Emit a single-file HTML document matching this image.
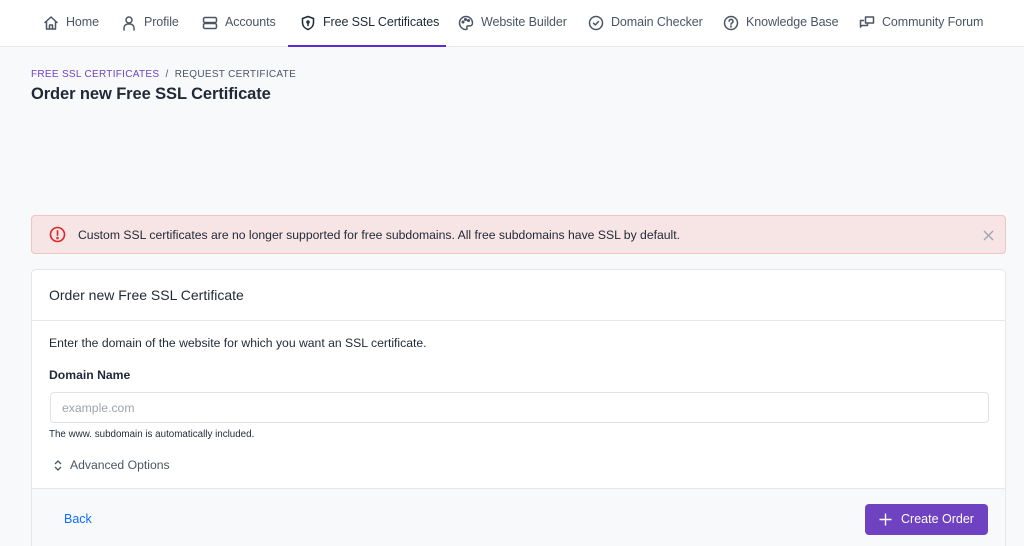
<!DOCTYPE html>
<html><head><meta charset="utf-8"><style>
*{box-sizing:border-box;margin:0;padding:0}
html,body{width:1024px;height:546px;overflow:hidden}
body{background:#f8f9fb;font-family:"Liberation Sans",sans-serif;color:#1f2937;position:relative}
.nav{position:absolute;left:0;top:0;width:1024px;height:47px;background:#fff;border-bottom:1px solid #e5e7eb}
.ni{position:absolute;top:0;height:46px;font-size:12.5px;color:#4b5563;letter-spacing:-.1px}
.ni svg{position:absolute;top:15px;width:16px;height:16px;fill:none;stroke:#4b5563;stroke-width:1.5;stroke-linecap:round;stroke-linejoin:round}
.ni span{position:absolute;top:15px;white-space:nowrap}
.ul{position:absolute;left:288px;top:45px;width:158px;height:2px;background:#5b2bd6}
.abs{position:absolute;white-space:nowrap}
.alert{position:absolute;left:31px;top:215px;width:975px;height:39px;background:#f7e4e4;border:1px solid #efc4c4;border-radius:4px}
.card{position:absolute;left:31px;top:269px;width:975px;height:290px;background:#fff;border:1px solid #e5e7eb;border-radius:5px;overflow:hidden}
.input{position:absolute;left:18px;top:122px;width:939px;height:31px;border:1px solid #dfe2e6;border-radius:4px}
.foot{position:absolute;left:0;top:218px;width:975px;height:80px;background:#f8f9fb;border-top:1px solid #e5e7eb}
.btn{position:absolute;left:833px;top:15px;width:123px;height:31px;background:#6f42c1;border-radius:4px;color:#fff;font-size:12.5px}
</style></head><body>
<div class="nav">
<div class="ni" style="left:43px"><svg style="left:0" viewBox="0 0 16 16"><path d="M2 7.5L8 2l6 5.5M3.5 6.5V14h9V6.5M6.5 14v-4h3v4"/></svg><span style="left:23px">Home</span></div>
<div class="ni" style="left:121px"><svg style="left:0" viewBox="0 0 16 16"><circle cx="8" cy="5" r="3"/><path d="M3 15v-2a4 4 0 0 1 4-4h2a4 4 0 0 1 4 4v2"/></svg><span style="left:23px">Profile</span></div>
<div class="ni" style="left:202px"><svg style="left:0" viewBox="0 0 16 16"><rect x="1.5" y="2.5" width="13" height="5" rx="1.5"/><rect x="1.5" y="8.5" width="13" height="5" rx="1.5"/></svg><span style="left:23px">Accounts</span></div>
<div class="ni" style="left:300px;color:#1f2937"><svg style="left:0;stroke:#1f2937" viewBox="0 0 16 16"><path d="M8 1.5l5.5 2v4c0 3.5-2.5 6-5.5 7-3-1-5.5-3.5-5.5-7v-4z"/><circle cx="8" cy="7" r="1"/><path d="M8 8v2.5"/></svg><span style="left:23px">Free SSL Certificates</span></div>
<div class="ni" style="left:458px"><svg style="left:0" viewBox="0 0 16 16"><path d="M8 1.5a6.5 6.5 0 1 0 0 13c1 0 1.3-.8.9-1.6-.5-1 .1-2 1.2-2h1.8a2.6 2.6 0 0 0 2.6-2.6C14.5 4.3 11.6 1.5 8 1.5z"/><circle cx="5" cy="7" r=".8"/><circle cx="7.5" cy="4.5" r=".8"/><circle cx="10.5" cy="5.5" r=".8"/></svg><span style="left:23px">Website Builder</span></div>
<div class="ni" style="left:588px"><svg style="left:0" viewBox="0 0 16 16"><circle cx="8" cy="8" r="6.5"/><path d="M5.5 8.2l1.8 1.8 3.2-3.5"/></svg><span style="left:23px">Domain Checker</span></div>
<div class="ni" style="left:723px"><svg style="left:0" viewBox="0 0 16 16"><circle cx="8" cy="8" r="6.5"/><path d="M6.2 6.2a1.9 1.9 0 1 1 2.6 1.8c-.6.3-.8.7-.8 1.3"/><circle cx="8" cy="11.5" r=".4"/></svg><span style="left:23px">Knowledge Base</span></div>
<div class="ni" style="left:859px"><svg style="left:0" viewBox="0 0 16 16"><path d="M6.5 2h8v6h-2M6.5 2v6h5"/><path d="M4.5 5.5H1.5v6.5l1.5-1.5h5.5V9"/></svg><span style="left:23px">Community Forum</span></div>
<div class="ul"></div>
</div>
<div class="abs" style="left:31px;top:69px;font-size:10px;letter-spacing:.3px;color:#6f42c1">FREE SSL CERTIFICATES <span style="color:#4b5563">&nbsp;/&nbsp; REQUEST CERTIFICATE</span></div>
<div class="abs" style="left:31px;top:85px;font-size:16.5px;font-weight:bold;color:#1f2937;letter-spacing:-.1px">Order new Free SSL Certificate</div>
<div class="alert">
<svg style="position:absolute;left:17px;top:10px" width="17" height="17" viewBox="0 0 17 17" fill="none" stroke="#dc2626" stroke-width="1.6" stroke-linecap="round"><circle cx="8.5" cy="8.5" r="7"/><path d="M8.5 4.8v4.4"/><circle cx="8.5" cy="12" r=".5"/></svg>
<div class="abs" style="left:46px;top:12px;font-size:12.2px;color:#1f2937">Custom SSL certificates are no longer supported for free subdomains. All free subdomains have SSL by default.</div>
<svg style="position:absolute;left:951px;top:14px" width="11" height="11" viewBox="0 0 11 11" stroke="#9ca3af" stroke-width="1.3"><path d="M1 1l9 9M10 1l-9 9"/></svg>
</div>
<div class="card">
<div class="abs" style="left:17px;top:17px;font-size:14px;color:#1f2937">Order new Free SSL Certificate</div>
<div style="position:absolute;left:0;top:50px;width:975px;border-top:1px solid #e5e7eb"></div>
<div class="abs" style="left:17px;top:66px;font-size:12.2px;color:#1f2937">Enter the domain of the website for which you want an SSL certificate.</div>
<div class="abs" style="left:17px;top:98px;font-size:12.2px;font-weight:bold;color:#1f2937">Domain Name</div>
<div class="input"><div class="abs" style="left:11px;top:8px;font-size:12.2px;color:#9ca3af">example.com</div></div>
<div class="abs" style="left:17px;top:159px;font-size:9.8px;color:#1f2937">The www. subdomain is automatically included.</div>
<svg style="position:absolute;left:22px;top:189px" width="8" height="13" viewBox="0 0 8 13" fill="none" stroke="#4b5563" stroke-width="1.3"><path d="M1 5l3-3 3 3M1 8l3 3 3-3"/></svg>
<div class="abs" style="left:38px;top:188px;font-size:12.2px;color:#4b5563">Advanced Options</div>
<div class="foot">
<div class="abs" style="left:32px;top:23px;font-size:12.5px;color:#0d6efd">Back</div>
<div class="btn"><svg style="position:absolute;left:14px;top:9px" width="13" height="13" viewBox="0 0 13 13" stroke="#fff" stroke-width="1.4"><path d="M6.5 0.5v12M0.5 6.5h12"/></svg><span class="abs" style="left:36px;top:8px">Create Order</span></div>
</div>
</div>
</body></html>
